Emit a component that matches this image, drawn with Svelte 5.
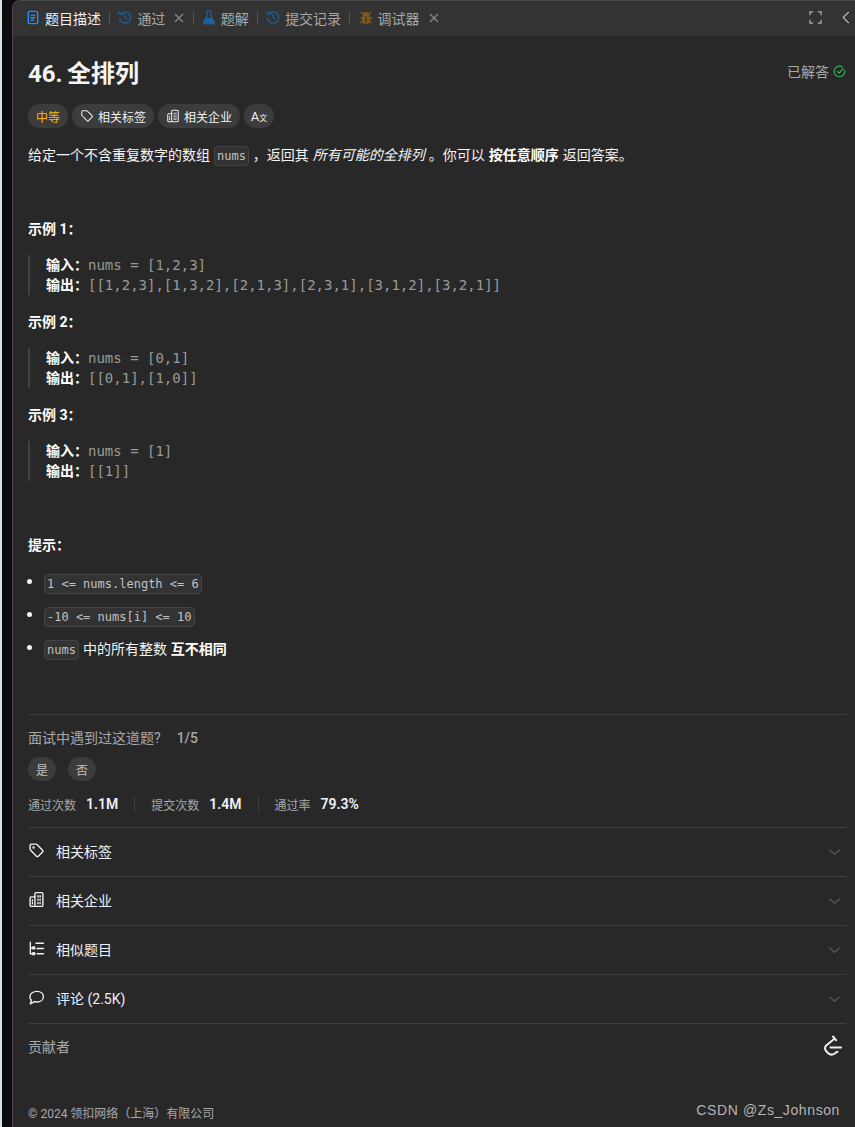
<script>
  const tabs = [
    { label: "题目描述", icon: "doc", active: true },
    { label: "通过", icon: "history", close: true },
    { label: "题解", icon: "flask" },
    { label: "提交记录", icon: "history" },
    { label: "调试器", icon: "bug", close: true }
  ];

  const examples = [
    { n: 1, input: "nums = [1,2,3]", output: "[[1,2,3],[1,3,2],[2,1,3],[2,3,1],[3,1,2],[3,2,1]]" },
    { n: 2, input: "nums = [0,1]", output: "[[0,1],[1,0]]" },
    { n: 3, input: "nums = [1]", output: "[[1]]" }
  ];

  const stats = [
    { label: "通过次数", value: "1.1M" },
    { label: "提交次数", value: "1.4M" },
    { label: "通过率", value: "79.3%" }
  ];

  const rows = [
    { label: "相关标签", icon: "tag" },
    { label: "相关企业", icon: "company" },
    { label: "相似题目", icon: "similar" },
    { label: "评论 (2.5K)", icon: "comment" }
  ];
</script>

{#snippet rowIcon(name)}
  <svg class="ico" viewBox="0 0 16 16" fill="none" stroke="currentColor" stroke-width="1.3" stroke-linejoin="round" stroke-linecap="round">
    {#if name === "tag"}
      <path d="M2 3.2c0-.7.5-1.2 1.2-1.2h4.2c.4 0 .7.1 1 .4l5.3 5.3c.5.5.5 1.2 0 1.7l-4 4c-.5.5-1.2.5-1.7 0L2.7 8c-.4-.4-.7-.8-.7-1.3z" />
      <circle cx="5.2" cy="5.2" r=".5" />
    {:else if name === "company"}
      <rect x="6.5" y="1.5" width="7.5" height="13" rx="1.2" />
      <path d="M6.5 5.5H3.2c-.7 0-1.2.5-1.2 1.2v6.600c0 .7.5 1.2 1.2 1.2h3.3" />
      <path d="M9.4 4.5v1.2M11.4 4.5v1.2M9.4 7.6v1.2M11.4 7.6v1.2M9.4 10.7v1.2M11.4 10.7v1.2M4.200 8.5v1M4.200 11v1" />
    {:else if name === "similar"}
      <path d="M2.2 2v11h3M2.2 7.5h3" />
      <path d="M7.5 3h7M8.5 8h6M8.5 13h6" />
      <rect x="4.6" y="6.6" width="1.6" height="1.8" />
      <rect x="4.6" y="12" width="1.6" height="1.8" />
    {:else}
      <path d="M8.500 2.200c3.300 0 6 2 6 5s-2.700 5-6 5c-.9 0-1.700-.1-2.400-.4L2.200 14l.9-3.400C2.200 9.600 1.800 8.400 1.800 7.200c0-3 3.300-5 6.700-5z" />
    {/if}
  </svg>
{/snippet}

{#snippet tabIcon(name)}
  {#if name === "doc"}
    <svg class="tab-ico" viewBox="0 0 14 16" fill="none" stroke="#2b8bf0" stroke-width="1.5" stroke-linecap="round">
      <rect x="2" y="1.500" width="10" height="13" rx="1.500" />
      <path d="M5 5.500h4M5 8.200h4M5 10.900h2.500" />
    </svg>
  {:else if name === "history"}
    <svg class="tab-ico" viewBox="0 0 16 16" fill="none" stroke="#1d5c94" stroke-width="1.700" stroke-linecap="round" stroke-linejoin="round">
      <path d="M3.200 3.800A6.400 6.400 0 1 1 1.700 8.800" />
      <path d="M1 2l1.800 2.600 2.800-.5" />
      <path d="M8.300 5v3.300l2 1.400" />
    </svg>
  {:else if name === "flask"}
    <svg class="tab-ico" viewBox="0 0 14 16" fill="none">
      <path stroke="#1f5f9c" stroke-width="1.400" d="M4 1.200h6M5 1.200v5L1.500 12.600c-.5 1 .2 2.200 1.300 2.200h8.400c1.100 0 1.800-1.200 1.300-2.200L9 6.200v-5" />
      <path fill="#1f5f9c" d="M3.700 8.500h6.600l2.500 4.200c.6 1-.1 2.100-1.200 2.100H2.400c-1.100 0-1.800-1.100-1.200-2.100z" />
    </svg>
  {:else}
    <svg class="tab-ico" viewBox="0 0 16 16" fill="none" stroke="#7d5a1e" stroke-width="1.500" stroke-linecap="round">
      <path fill="#7d5a1e" d="M5 5.500a3 3 0 0 1 6 0z" />
      <rect fill="#7d5a1e" x="4.200" y="5.500" width="7.600" height="9" rx="3.500" />
      <path stroke="#3a3020" d="M8 7v6" />
      <path d="M4 8.500H1M12 8.500h3M4.500 11.500L2 14M11.500 11.500L14 14M5 4.500L2.500 2M11 4.500L13.500 2" />
    </svg>
  {/if}
{/snippet}

<div class="page">
  <div class="gutter"></div>
  <div class="panel">
    <nav class="tabs">
      {#each tabs as tab, i}
        {#if i > 0}<span class="tab-sep"></span>{/if}
        <span class="tab" class:active={tab.active}>
          {@render tabIcon(tab.icon)}
          {tab.label}
          {#if tab.close}
            <svg class="close" viewBox="0 0 10 10" stroke="currentColor" stroke-width="1.200"><path d="M1 1l8 8M9 1l-8 8" /></svg>
          {/if}
        </span>
      {/each}
      <span class="tab-right">
        <svg class="full" viewBox="0 0 14 14" fill="none" stroke="currentColor" stroke-width="1.300"><path d="M1 4.500V1h3.500M9.500 1H13v3.500M13 9.500V13H9.500M4.500 13H1V9.500" /></svg>
        <svg class="collapse" viewBox="0 0 8 14" fill="none" stroke="currentColor" stroke-width="1.400"><path d="M7 1L1 7l6 6" /></svg>
      </span>
    </nav>

    <main class="content">
      <header class="title-row">
        <h1>46. 全排列</h1>
        <span class="solved">
          已解答
          <svg viewBox="0 0 14 14" fill="none" stroke="#2cbb5d" stroke-width="1.200" stroke-linecap="round" stroke-linejoin="round">
            <path d="M12.500 5.800A5.700 5.700 0 1 1 9.800 2" />
            <path d="M4.600 6.800l2 2 4.400-4.800" />
          </svg>
        </span>
      </header>

      <div class="pills">
        <span class="pill easy">中等</span>
        <span class="pill"><svg class="pill-ico" viewBox="0 0 16 16" fill="none" stroke="currentColor" stroke-width="1.200" stroke-linejoin="round"><path d="M2 3.200c0-.7.5-1.200 1.200-1.200h4.200c.4 0 .7.1 1 .4l5.300 5.300c.5.5.5 1.200 0 1.700l-4 4c-.5.5-1.200.5-1.700 0L2.700 8c-.4-.4-.7-.8-.7-1.300z" /></svg>相关标签</span>
        <span class="pill"><svg class="pill-ico" viewBox="0 0 16 16" fill="none" stroke="currentColor" stroke-width="1.200" stroke-linecap="round"><rect x="6.500" y="1.500" width="7.500" height="13" rx="1.200" /><path d="M6.500 5.500H3.200c-.7 0-1.200.5-1.200 1.200v6.600c0 .7.5 1.200 1.200 1.200h3.300M9.400 4.500v1.200M11.400 4.500v1.200M9.400 7.600v1.200M11.400 7.600v1.200M9.400 10.700v1.200M11.400 10.700v1.200M4.200 8.500v1M4.200 11v1" /></svg>相关企业</span>
        <span class="pill translate">A<span class="small-x">文</span></span>
      </div>

      <p class="desc">给定一个不含重复数字的数组 <code>nums</code> ，返回其 <em>所有可能的全排列</em> 。你可以 <strong>按任意顺序</strong> 返回答案。</p>

      {#each examples as ex}
        <p class="ex-title">示例 {ex.n}：</p>
        <div class="example">
          <div><strong>输入：</strong><span class="mono">{ex.input}</span></div>
          <div><strong>输出：</strong><span class="mono">{ex.output}</span></div>
        </div>
      {/each}

      <p class="hint-title">提示：</p>
      <ul>
        <li><code>1 &lt;= nums.length &lt;= 6</code></li>
        <li><code>-10 &lt;= nums[i] &lt;= 10</code></li>
        <li><code>nums</code> 中的所有整数 <strong>互不相同</strong></li>
      </ul>

      <hr class="rule-top" />

      <div class="interview"><span>面试中遇到过这道题?</span><span class="count">1/5</span></div>
      <div class="votes">
        <span class="vote">是</span>
        <span class="vote">否</span>
      </div>

      <div class="stats">
        {#each stats as s}
          <span class="stat"><span class="stat-label">{s.label}</span><b>{s.value}</b></span>
        {/each}
      </div>

      {#each rows as row}
        <div class="row">
          <span class="row-left">{@render rowIcon(row.icon)}{row.label}</span>
          <svg class="chev" viewBox="0 0 14 8" fill="none" stroke="currentColor" stroke-width="1.500"><path d="M1.500 1.500L7 6.500l5.500-5" /></svg>
        </div>
      {/each}

      <div class="contrib">
        <span>贡献者</span>
        <svg class="logo" viewBox="0 0 19 21" fill="none" stroke="#eee" stroke-width="2" stroke-linecap="round" stroke-linejoin="round">
          <path d="M10.500 4.500L3.200 10.500c-1.600 1.500-1.600 4 0 5.500l2 2.300c1.800 1.500 4.600 1.500 6.500.2l2.800-1.800" />
          <path d="M7.500 12.500H18" />
          <path d="M10 1.500l3.200 3.800" />
        </svg>
      </div>

      <footer class="copyright">© 2024 领扣网络（上海）有限公司</footer>
    </main>
  </div>
  <span class="watermark">CSDN @Zs_Johnson</span>
</div>

<style>
  :global(body) {
    background: #282828;
  }
  .page {
    position: relative;
    display: flex;
    width: 855px;
    height: 1127px;
    overflow: hidden;
    background: linear-gradient(to right, #d3e6ee 0 2px, #0c0c0c 2px);
    font-family: Roboto, "Noto Sans CJK SC", sans-serif;
    color: #eff1f6;
    font-size: 14px;
  }
  .gutter {
    width: 12px;
    flex: none;
  }
  .panel {
    flex: 1;
    min-width: 0;
    background: #282828;
    border-left: 1px solid #4a4a4a;
    border-top: 1px solid #4a4a4a;
    border-top-left-radius: 8px;
  }
  .tabs {
    display: flex;
    align-items: center;
    box-sizing: border-box;
    height: 35px;
    padding: 0 0 2px 13px;
    background: #333333;
    border-top-left-radius: 8px;
    color: #a8a8a8;
    font-size: 14px;
  }
  .tab {
    display: inline-flex;
    align-items: center;
    gap: 3px;
  }
  .tab.active {
    color: #eff1f6;
  }
  .tab-ico {
    width: 14px;
    height: 15px;
    margin-right: 2px;
  }
  .close {
    width: 10px;
    height: 10px;
    margin-left: 6px;
    color: #8a8a8a;
  }
  .tab-sep {
    width: 1px;
    height: 12px;
    margin: 0 8.2px;
    background: #555;
  }
  .tab-right {
    margin-left: auto;
    display: inline-flex;
    align-items: center;
    gap: 20px;
    padding-right: 5px;
    color: #b0b0b0;
  }
  .full {
    width: 13px;
    height: 13px;
  }
  .collapse {
    width: 8px;
    height: 13px;
  }
  .content {
    padding: 0 9px 0 15px;
  }
  .title-row {
    display: flex;
    justify-content: space-between;
    align-items: center;
    height: 34px;
    margin-top: 21px;
  }
  h1 {
    margin: 0;
    font-size: 24px;
    font-weight: 700;
    line-height: 34px;
    word-spacing: -1.5px;
    color: #f5f5f5;
  }
  .solved {
    display: inline-flex;
    align-items: center;
    gap: 4px;
    margin-top: -6px;
    color: #a8a8a8;
    font-size: 14px;
  }
  .solved svg {
    width: 13px;
    height: 13px;
  }
  .pills {
    display: flex;
    gap: 4px;
    margin-top: 13px;
  }
  .pill {
    display: inline-flex;
    align-items: center;
    gap: 4px;
    height: 24px;
    padding: 0 8px;
    border-radius: 12px;
    background: #3c3c3c;
    color: #eff1f6;
    font-size: 12px;
  }
  .pill.easy {
    color: #ffb800;
  }
  .pill-ico {
    width: 14px;
    height: 14px;
  }
  .pill.translate {
    gap: 0;
    justify-content: center;
    width: 30px;
    padding: 0;
    font-size: 13px;
  }
  .small-x {
    font-size: 8px;
    margin-top: 3px;
  }
  .desc {
    margin: 16px 0 0;
    line-height: 22px;
    font-size: 14px;
    word-spacing: 0.5px;
    color: #f5f5f5;
  }
  code {
    display: inline-block;
    font-family: "DejaVu Sans Mono", "Noto Sans CJK SC", monospace;
    font-size: 12px;
    line-height: 18px;
    padding: 0 2px;
    word-spacing: 0;
    color: #c2c2c2;
    background: #333;
    border: 1px solid #454545;
    border-radius: 4px;
  }
  .desc em {
    font-style: italic;
  }
  strong {
    font-weight: 700;
    color: #fff;
  }
  .ex-title {
    margin: 0;
    font-size: 14px;
    line-height: 20px;
    font-weight: 700;
    color: #fff;
  }
  .desc + .ex-title {
    margin-top: 53px;
  }
  .example + .ex-title {
    margin-top: 17px;
  }
  .example {
    margin-top: 16px;
    padding-left: 16px;
    border-left: 2px solid #424242;
    font-size: 14px;
  }
  .example > div {
    height: 20px;
    line-height: 20px;
  }
  .mono {
    font-family: "DejaVu Sans Mono", monospace;
    font-size: 14px;
    color: #9a9a9a;
  }
  .hint-title {
    margin: 54px 0 0;
    font-size: 14px;
    line-height: 20px;
    font-weight: 700;
    color: #fff;
  }
  ul {
    margin: 17px 0 0;
    padding-left: 16px;
    list-style: none;
  }
  li {
    position: relative;
    height: 33px;
    font-size: 14px;
    line-height: 22px;
    word-spacing: 0.5px;
    color: #f5f5f5;
  }
  li::before {
    content: "";
    position: absolute;
    left: -17px;
    top: 7px;
    width: 5px;
    height: 5px;
    border-radius: 50%;
    background: #f5f5f5;
  }
  .rule-top {
    margin: 43px 0 0;
    border: 0;
    border-top: 1px solid #3e3e3e;
  }
  .interview {
    display: flex;
    gap: 16px;
    margin-top: 13px;
    line-height: 20px;
    font-size: 14px;
    color: #a8a8a8;
  }
  .count {
    font-weight: 500;
  }
  .votes {
    display: flex;
    gap: 12px;
    margin-top: 9px;
  }
  .vote {
    display: inline-flex;
    align-items: center;
    justify-content: center;
    width: 28px;
    height: 24px;
    border-radius: 12px;
    background: #3c3c3c;
    font-size: 12px;
    color: #c2c2c2;
  }
  .stats {
    display: flex;
    margin-top: 16px;
    height: 14px;
    align-items: center;
    font-size: 12px;
  }
  .stat {
    display: inline-flex;
    align-items: center;
    gap: 10px;
    padding-right: 16px;
    margin-right: 16px;
    border-right: 1px solid #3e3e3e;
  }
  .stat:last-child {
    border: 0;
  }
  .stat-label {
    color: #a8a8a8;
  }
  .stat b {
    font-size: 14px;
    font-weight: 600;
    color: #eff1f6;
  }
  .stats + .row {
    margin-top: 16px;
  }
  .row {
    display: flex;
    align-items: center;
    justify-content: space-between;
    box-sizing: border-box;
    height: 49px;
    padding-bottom: 3px;
    border-top: 1px solid #3e3e3e;
    font-size: 14px;
    color: #eff1f6;
  }
  .row-left {
    display: inline-flex;
    align-items: center;
    gap: 11px;
  }
  .ico {
    width: 17px;
    height: 17px;
  }
  .chev {
    width: 13px;
    height: 8px;
    margin: 3px 5px 0 0;
    color: #555;
  }
  .contrib {
    display: flex;
    align-items: center;
    justify-content: space-between;
    box-sizing: border-box;
    height: 49px;
    padding-bottom: 5px;
    border-top: 1px solid #3e3e3e;
    font-size: 14px;
    color: #a8a8a8;
  }
  .logo {
    width: 19px;
    height: 21px;
    margin-right: 4px;
  }
  .copyright {
    margin-top: 34px;
    font-size: 12px;
    line-height: 16px;
    color: #a8a8a8;
  }
  .watermark {
    position: absolute;
    right: 15px;
    bottom: 9px;
    font-family: "Liberation Sans", sans-serif;
    font-size: 14px;
    letter-spacing: 0.6px;
    color: #b5b5b5;
  }
</style>
